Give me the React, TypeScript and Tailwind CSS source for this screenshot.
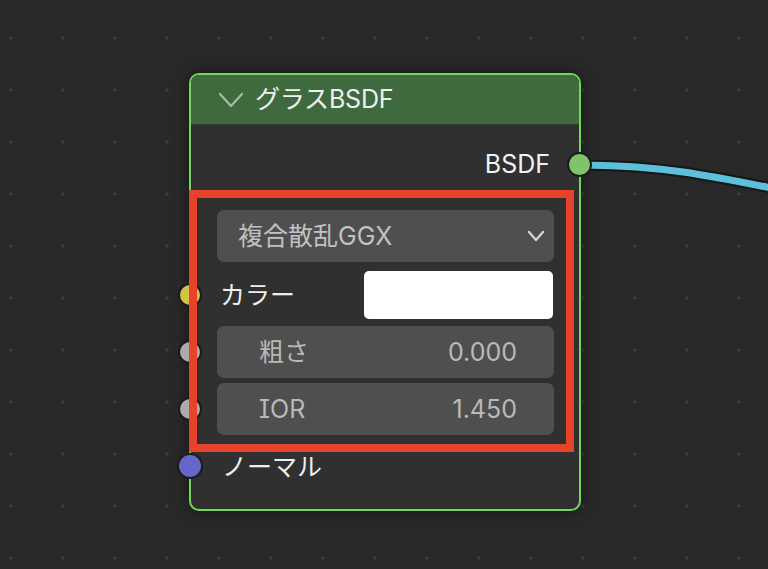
import React from "react";

const font = "font-['Inter','Noto_Sans_CJK_JP',sans-serif]";

function Socket({ color, left, top, size = 25 }: { color: string; left: number; top: number; size?: number }) {
  return (
    <div
      className="absolute rounded-full border-2 border-[#1b1b1b]"
      style={{ left, top, width: size, height: size, backgroundColor: color }}
    />
  );
}

export default function App() {
  return (
    <div
      className={`relative w-[768px] h-[569px] overflow-hidden bg-[#282828] bg-[radial-gradient(circle,#3b3b3b_1.3px,transparent_2px)] bg-[size:52px_52px] bg-[position:37px_12px] ${font}`}
    >
      <svg className="absolute left-0 top-0" width="768" height="569">
        <path d="M 585 165 C 660 166, 700 173, 800 194" stroke="#161616" strokeWidth="11" fill="none" />
        <path d="M 585 165 C 660 166, 700 173, 800 194" stroke="#5cc1d8" strokeWidth="7" fill="none" />
      </svg>

      <div className="absolute left-[189px] top-[73px] w-[392px] h-[438px] rounded-[10px] border-2 border-[#6fd95b] bg-[#303030] shadow-[0_0_14px_rgba(0,0,0,0.45)]">
        {/* header */}
        <div className="h-[50px] rounded-t-[8px] bg-[#3f6a3d] border-b border-[#2c3f2b] flex items-center">
          <svg className="ml-[27px]" width="26" height="16" viewBox="0 0 26 16">
            <path d="M2 2 L13 14 L24 2" stroke="#a9b9a7" strokeWidth="2.2" fill="none" strokeLinecap="round" strokeLinejoin="round" />
          </svg>
          <span className="ml-[11px] text-[25px] leading-none text-[#f0f0f0] tracking-[-0.2px]">グラスBSDF</span>
        </div>

        {/* output row */}
        <div className="h-[40px] mt-[19px] flex items-center justify-end pr-[29px]">
          <span className="text-[25px] leading-none text-[#f2f2f2]">BSDF</span>
        </div>

        {/* sockets */}
        <Socket color="#7fc46a" left={376} top={77} />
        <Socket color="#d2c546" left={-13} top={208} size={24} />
        <Socket color="#ababab" left={-13} top={265} size={24} />
        <Socket color="#ababab" left={-13} top={322} size={24} />
        <Socket color="#6467c9" left={-14} top={378} size={26} />

        {/* highlighted box */}
        <div className="relative z-10 ml-[-2px] mt-[6px] w-[385px] border-[8px] border-[#e6432a] pt-[12px] pb-[9px] pl-[20px] pr-[12px] flex flex-col">
          <div className="h-[52px] rounded-[7px] bg-[#4f4f4f] flex items-center justify-between pl-[21px] pr-[9px]">
            <span className="text-[25px] leading-none text-[#c2c2c2]">複合散乱GGX</span>
            <svg width="18" height="12" viewBox="0 0 18 12">
              <path d="M2 2 L9 10 L16 2" stroke="#d2d2d2" strokeWidth="2.4" fill="none" strokeLinecap="round" strokeLinejoin="round" />
            </svg>
          </div>

          <div className="mt-[9px] h-[48px] flex items-center justify-between">
            <span className="ml-[3px] text-[25px] leading-none text-[#eeeeee]">カラー</span>
            <div className="w-[189px] h-[48px] rounded-[5px] bg-white mr-[1px]" />
          </div>

          <div className="mt-[7px] h-[52px] rounded-[7px] bg-[#4f4f4f] flex items-center justify-between pl-[42px] pr-[37px]">
            <span className="text-[25px] leading-none text-[#b9b9b9]">粗さ</span>
            <span className="text-[25px] leading-none text-[#b9b9b9]">0.000</span>
          </div>

          <div className="mt-[5px] h-[52px] rounded-[7px] bg-[#4f4f4f] flex items-center justify-between pl-[42px] pr-[37px]">
            <span className="text-[25px] leading-none text-[#b9b9b9] [font-feature-settings:'cv08']">IOR</span>
            <span className="text-[25px] leading-none text-[#b9b9b9]">1.450</span>
          </div>
        </div>

        {/* normal row */}
        <div className="h-[30px] flex items-center pl-[31px]">
          <span className="text-[25px] leading-none text-[#eeeeee]">ノーマル</span>
        </div>
      </div>
    </div>
  );
}
